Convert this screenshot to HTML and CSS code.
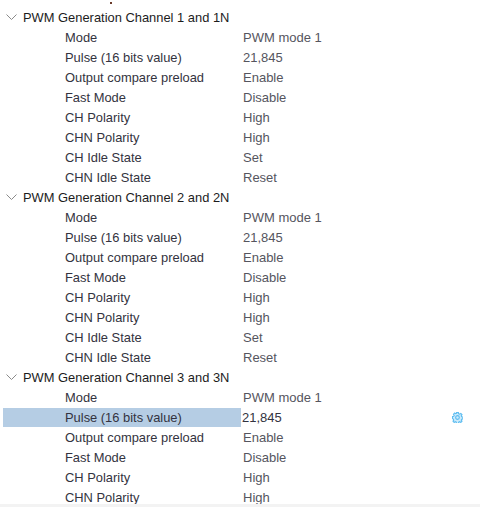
FILE: index.html
```html
<!DOCTYPE html>
<html lang="en">
<head>
  <meta charset="UTF-8" />
  <meta name="viewport" content="width=device-width, initial-scale=1.0" />
  <title>PWM Channels</title>
  <link rel="stylesheet" href="styles.css">
</head>
<body>
  <div class="tree">
    <div class="tree-scroll">
      <div class="speck"></div>

      <div class="group-row">
        <svg class="chevron" width="11" height="6" viewBox="0 0 11 6"><path d="M0.5 0.5 L5.5 5.5 L10.5 0.5" /></svg>
        <span>PWM Generation Channel 1 and 1N</span>
      </div>
      <div class="row"><span class="name">Mode</span><span class="value">PWM mode 1</span></div>
      <div class="row"><span class="name">Pulse (16 bits value)</span><span class="value">21,845</span></div>
      <div class="row"><span class="name">Output compare preload</span><span class="value">Enable</span></div>
      <div class="row"><span class="name">Fast Mode</span><span class="value">Disable</span></div>
      <div class="row"><span class="name">CH Polarity</span><span class="value">High</span></div>
      <div class="row"><span class="name">CHN Polarity</span><span class="value">High</span></div>
      <div class="row"><span class="name">CH Idle State</span><span class="value">Set</span></div>
      <div class="row"><span class="name">CHN Idle State</span><span class="value">Reset</span></div>

      <div class="group-row">
        <svg class="chevron" width="11" height="6" viewBox="0 0 11 6"><path d="M0.5 0.5 L5.5 5.5 L10.5 0.5" /></svg>
        <span>PWM Generation Channel 2 and 2N</span>
      </div>
      <div class="row"><span class="name">Mode</span><span class="value">PWM mode 1</span></div>
      <div class="row"><span class="name">Pulse (16 bits value)</span><span class="value">21,845</span></div>
      <div class="row"><span class="name">Output compare preload</span><span class="value">Enable</span></div>
      <div class="row"><span class="name">Fast Mode</span><span class="value">Disable</span></div>
      <div class="row"><span class="name">CH Polarity</span><span class="value">High</span></div>
      <div class="row"><span class="name">CHN Polarity</span><span class="value">High</span></div>
      <div class="row"><span class="name">CH Idle State</span><span class="value">Set</span></div>
      <div class="row"><span class="name">CHN Idle State</span><span class="value">Reset</span></div>

      <div class="group-row">
        <svg class="chevron" width="11" height="6" viewBox="0 0 11 6"><path d="M0.5 0.5 L5.5 5.5 L10.5 0.5" /></svg>
        <span>PWM Generation Channel 3 and 3N</span>
      </div>
      <div class="row"><span class="name">Mode</span><span class="value">PWM mode 1</span></div>
      <div class="row selected">
        <span class="name">Pulse (16 bits value)</span><span class="value">21,845</span>
        <svg class="gear" width="11" height="11" viewBox="0 0 12 12">
          <path d="M5 0.5h2l.3 1.4 1.1.5 1.2-.8 1.3 1.3-.8 1.2.5 1.1 1.4.3v2l-1.4.3-.5 1.1.8 1.2-1.3 1.3-1.2-.8-1.1.5-.3 1.4H5l-.3-1.4-1.1-.5-1.2.8-1.3-1.3.8-1.2-.5-1.1L.5 7V5l1.4-.3.5-1.1-.8-1.2 1.3-1.3 1.2.8 1.1-.5z" />
          <circle cx="6" cy="6" r="2" />
        </svg>
      </div>
      <div class="row"><span class="name">Output compare preload</span><span class="value">Enable</span></div>
      <div class="row"><span class="name">Fast Mode</span><span class="value">Disable</span></div>
      <div class="row"><span class="name">CH Polarity</span><span class="value">High</span></div>
      <div class="row"><span class="name">CHN Polarity</span><span class="value">High</span></div>
    </div>
  </div>
</body>
</html>
```

FILE: styles.css
```css
html,
body {
  height: 100%;
}

body {
  margin: 0;
  background: #ffffff;
  font-family: "Liberation Sans", Arial, sans-serif;
  font-size: 12.9px;
  color: #2b2b2b;
  overflow: hidden;
}

.tree {
  height: 504px;
  overflow: hidden;
  border-bottom: 3px solid #f3f3f3;
}

.tree-scroll {
  padding-top: 2px;
}

.speck {
  width: 2px;
  height: 2px;
  margin: 0 0 3px 110px;
  background: #6b3a2a;
}

.group-row,
.row {
  display: flex;
  align-items: center;
  height: 20px;
  white-space: nowrap;
}

.group-row {
  padding-left: 6px;
  color: #1c1c1c;
}

.chevron {
  margin-right: 6px;
  fill: none;
  stroke: #8a8a8a;
  stroke-width: 1;
}

.row {
  margin-left: 3px;
  width: 477px;
}

.name {
  box-sizing: border-box;
  width: 238px;
  padding-left: 62px;
  color: #333340;
  line-height: 19px;
}

.value {
  padding-left: 2px;
  color: #55555e;
  font-size: 13px;
}

.selected .name {
  background: #b5cde4;
}

.selected .value {
  padding-left: 1px;
  color: #333340;
}

.gear {
  margin-left: auto;
  margin-right: 17px;
  fill: #cdebfb;
  stroke: #5cbcf0;
  stroke-width: 1.2;
}
```
